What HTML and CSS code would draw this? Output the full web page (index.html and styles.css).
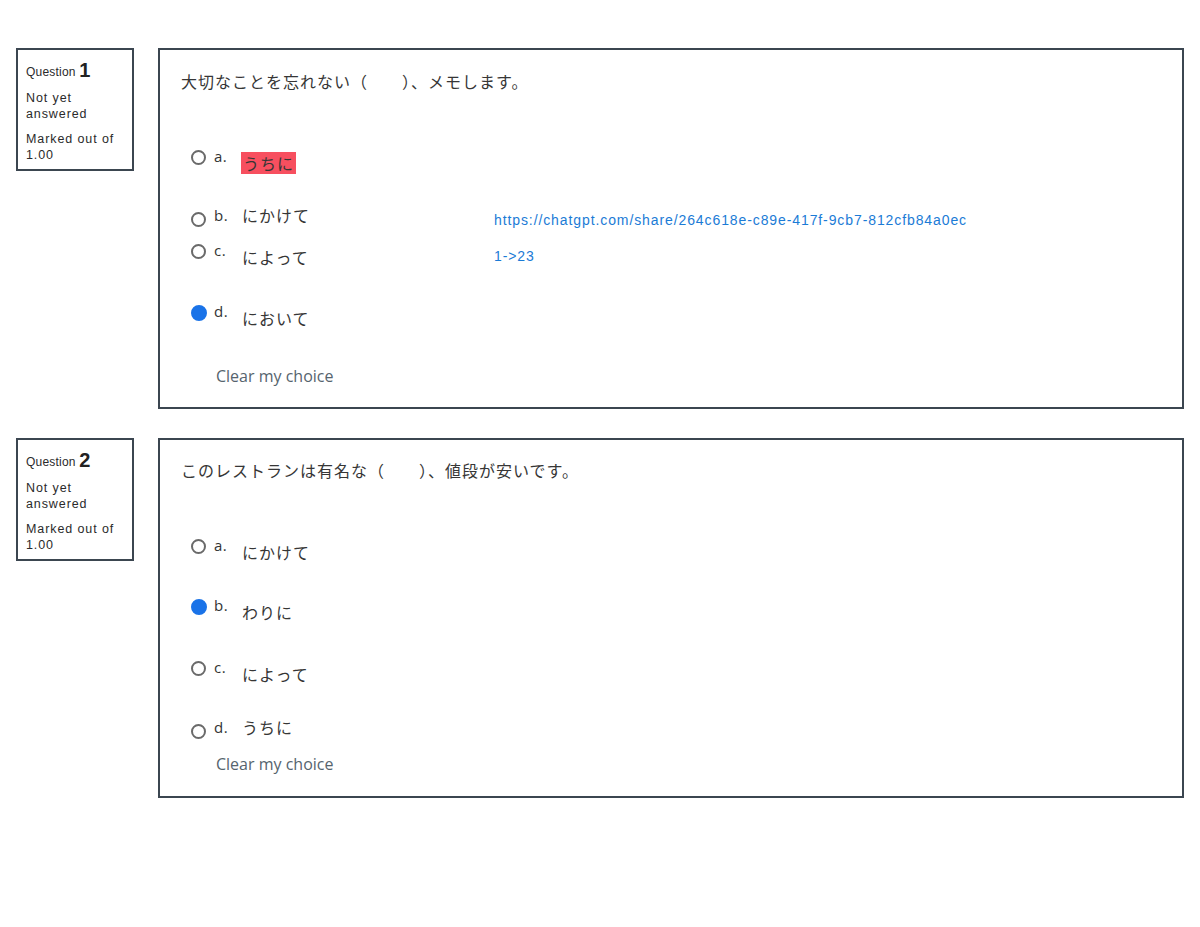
FILE: index.html
```html
<!DOCTYPE html>
<html lang="ja">
<head>
<meta charset="utf-8">
<link rel="stylesheet" href="styles.css">
</head>
<body>
<div class="page">
  <div class="que">
    <div class="info">
      <div class="qno">Question <b>1</b></div>
      <div class="state">Not yet<br>answered</div>
      <div class="grade">Marked out of<br>1.00</div>
    </div>
    <div class="content q1">
      <div class="qtext">大切なことを忘れない（　　）、メモします。</div>
      <div class="opts">
        <div class="opt"><span class="radio"></span><span class="lbl">a.</span><span class="txt hl">うちに</span></div>
        <div class="opt flat"><span class="radio"></span><span class="lbl">b.</span><span class="txt">にかけて</span></div>
        <div class="opt"><span class="radio"></span><span class="lbl">c.</span><span class="txt">によって</span></div>
        <div class="opt"><span class="radio on"></span><span class="lbl">d.</span><span class="txt">において</span></div>
      </div>
      <div class="clear">Clear my choice</div>
      <div class="note">
        <div>https://chatgpt.com/share/264c618e-c89e-417f-9cb7-812cfb84a0ec</div>
        <div>1-&gt;23</div>
      </div>
    </div>
  </div>
  <div class="que">
    <div class="info">
      <div class="qno">Question <b>2</b></div>
      <div class="state">Not yet<br>answered</div>
      <div class="grade">Marked out of<br>1.00</div>
    </div>
    <div class="content q2">
      <div class="qtext">このレストランは有名な（　　）、値段が安いです。</div>
      <div class="opts">
        <div class="opt"><span class="radio"></span><span class="lbl">a.</span><span class="txt">にかけて</span></div>
        <div class="opt"><span class="radio on"></span><span class="lbl">b.</span><span class="txt">わりに</span></div>
        <div class="opt"><span class="radio"></span><span class="lbl">c.</span><span class="txt">によって</span></div>
        <div class="opt flat"><span class="radio"></span><span class="lbl">d.</span><span class="txt">うちに</span></div>
      </div>
      <div class="clear">Clear my choice</div>
    </div>
  </div>
</div>
</body>
</html>
```

FILE: styles.css
```css
html, body {
  margin: 0;
  padding: 0;
  background: #ffffff;
}
.page {
  padding: 48px 16px 0 16px;
  display: flex;
  flex-direction: column;
  gap: 29px;
}
.que {
  display: flex;
  align-items: flex-start;
  gap: 24px;
}
.info {
  width: 118px;
  border: 2px solid #3b4650;
  padding: 10px 0 9px 8px;
  box-sizing: border-box;
  height: 123px;
  font-family: "Liberation Sans", Arial, sans-serif;
  font-size: 12.5px;
  letter-spacing: 0.9px;
  color: #2a2a2a;
  line-height: 16px;
}
.qno {
  font-size: 12px;
  letter-spacing: 0.2px;
  line-height: 20px;
  margin-bottom: 8px;
}
.qno b {
  font-size: 20px;
  font-weight: bold;
  vertical-align: -1px;
  color: #222;
}
.state {
  margin-bottom: 9px;
}
.content {
  position: relative;
  flex: 1;
  border: 2px solid #3b4650;
  padding: 21px 22px 21px 21px;
  font-family: "Noto Sans CJK JP", "Noto Sans", sans-serif;
  font-size: 16px;
  color: #363636;
  line-height: 20px;
  letter-spacing: 1px;
}
.q2 {
  padding-top: 20px;
  padding-bottom: 22px;
}
.opts {
  display: flex;
  flex-direction: column;
  padding-left: 10px;
}
.opt {
  display: flex;
  align-items: flex-start;
  height: 20px;
}
.q1 .opt:nth-child(1) { margin-top: 55px; }
.q1 .opt:nth-child(2) { margin-top: 39px; }
.q1 .opt:nth-child(3) { margin-top: 15px; }
.q1 .opt:nth-child(4) { margin-top: 41px; }
.q2 .opt:nth-child(1) { margin-top: 55px; }
.q2 .opt:nth-child(2) { margin-top: 40px; }
.q2 .opt:nth-child(3) { margin-top: 42px; }
.q2 .opt:nth-child(4) { margin-top: 40px; }
.radio {
  width: 15px;
  height: 15px;
  box-sizing: border-box;
  border: 2.5px solid #6a6a6a;
  border-radius: 50%;
  margin-top: 4px;
  flex: none;
}
.radio.on {
  width: 16px;
  height: 16px;
  background: #1a73e8;
  border-color: #1a73e8;
  margin-left: -0.5px;
  margin-right: -0.5px;
}
.lbl {
  font-family: "Open Sans", "Liberation Sans", sans-serif;
  font-size: 15px;
  letter-spacing: 0.5px;
  margin-left: 8px;
  width: 28px;
  color: #333;
}
.txt {
  margin-top: 7px;
  line-height: 20px;
}
.flat .txt {
  margin-top: 0;
}
.flat .radio {
  margin-top: 7px;
}
.hl {
  background: #f74f5f;
  padding: 1px 2px;
  margin-left: -1px;
  margin-top: 6px;
}
.clear {
  font-family: "Open Sans", "Liberation Sans", sans-serif;
  font-size: 16px;
  letter-spacing: 0;
  color: #56646e;
  margin-left: 35px;
  margin-top: 45px;
}
.q2 .clear {
  margin-top: 17px;
}
.note {
  position: absolute;
  left: 334px;
  top: 162px;
  font-family: "Liberation Sans", Arial, sans-serif;
  font-size: 14px;
  letter-spacing: 0.9px;
  color: #1b7bd6;
  line-height: 16px;
  display: flex;
  flex-direction: column;
  gap: 20px;
}
```
